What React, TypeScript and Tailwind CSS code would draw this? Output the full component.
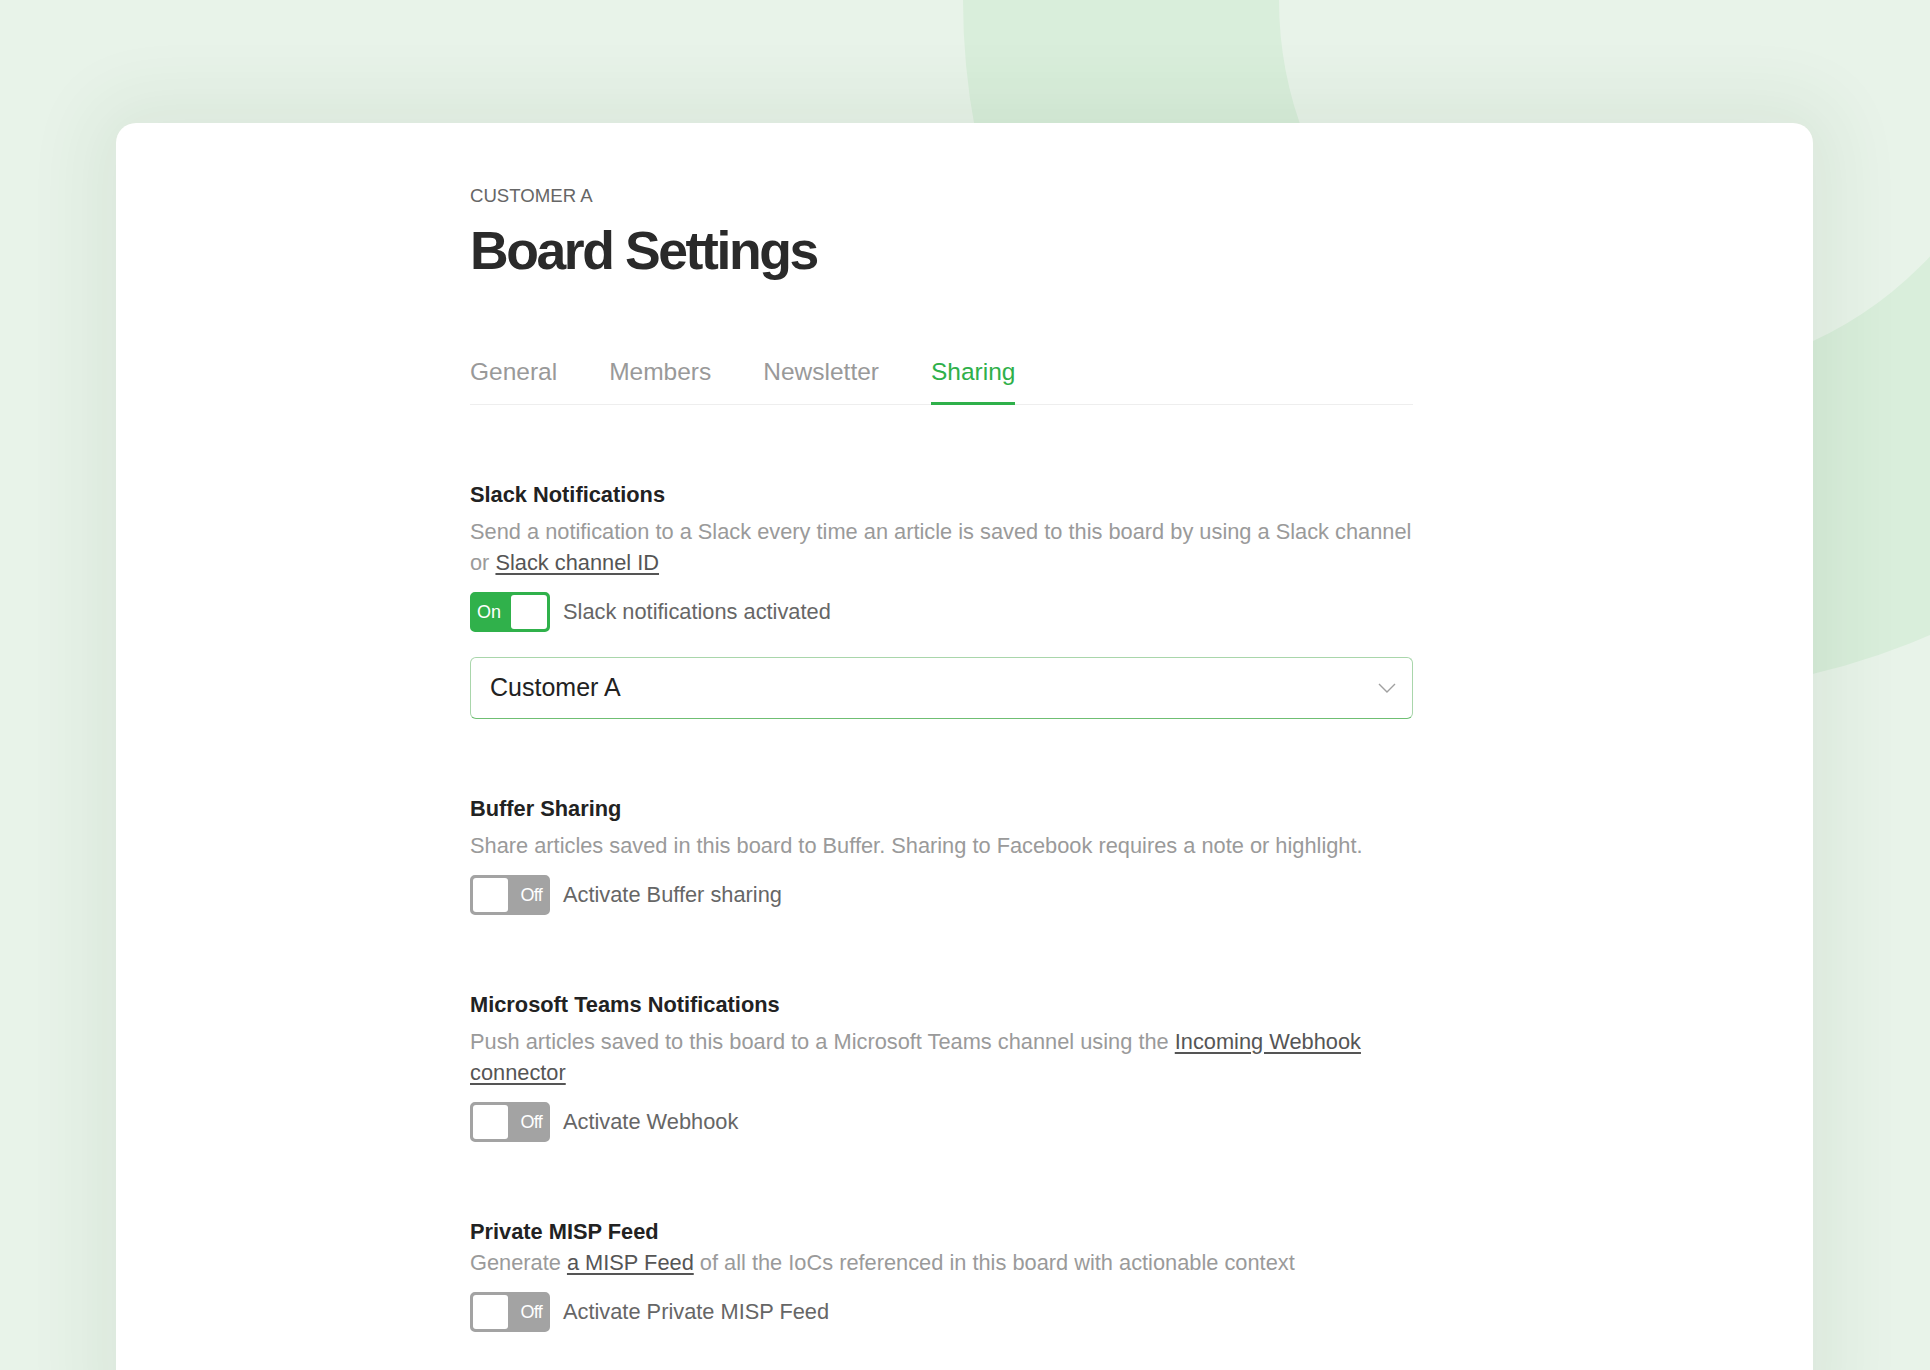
import { ReactNode } from 'react';

type Section = {
  title: string;
  description: ReactNode;
  label: string;
  on: boolean;
  tightDesc?: boolean;
  extra?: ReactNode;
};

function Toggle({ on }: { on: boolean }) {
  if (on) {
    return (
      <div className="w-[80px] h-[40px] shrink-0 rounded-[5px] border-2 border-[#30b14b] bg-[#30b14b] flex items-center justify-between pl-[5px] pr-px">
        <span className="text-[18px] leading-none text-white">On</span>
        <span className="w-[36px] h-[34px] rounded-[3px] bg-white" />
      </div>
    );
  }
  return (
    <div className="w-[80px] h-[40px] shrink-0 rounded-[5px] border-2 border-[#a3a3a3] bg-[#a3a3a3] flex items-center justify-between pl-px pr-[6px]">
      <span className="w-[35px] h-[34px] rounded-[3px] bg-white" />
      <span className="text-[18px] leading-none text-white tracking-[-0.04em]">Off</span>
    </div>
  );
}

function Link({ children }: { children: ReactNode }) {
  return <span className="text-[#555] underline underline-offset-[3px]">{children}</span>;
}

export default function App() {
  const tabs = ['General', 'Members', 'Newsletter', 'Sharing'];
  const active = 'Sharing';

  const sections: Section[] = [
    {
      title: 'Slack Notifications',
      description: (
        <>
          Send a notification to a Slack every time an article is saved to this board by using a Slack channel or{' '}
          <Link>Slack channel ID</Link>
        </>
      ),
      label: 'Slack notifications activated',
      on: true,
      extra: (
        <div className="mt-[25px] h-[62px] rounded-[6px] border border-[#a9d6ab] border-b-[#6fbf73] flex items-center justify-between pl-[19px] pr-[16px]">
          <span className="text-[25px] text-[#222]">Customer A</span>
          <svg width="18" height="10" viewBox="0 0 18 10" fill="none">
            <path d="M1 1l8 8 8-8" stroke="#a0a0a0" strokeWidth="1.4" />
          </svg>
        </div>
      ),
    },
    {
      title: 'Buffer Sharing',
      description: 'Share articles saved in this board to Buffer. Sharing to Facebook requires a note or highlight.',
      label: 'Activate Buffer sharing',
      on: false,
    },
    {
      title: 'Microsoft Teams Notifications',
      description: (
        <>
          Push articles saved to this board to a Microsoft Teams channel using the{' '}
          <Link>Incoming Webhook connector</Link>
        </>
      ),
      label: 'Activate Webhook',
      on: false,
    },
    {
      title: 'Private MISP Feed',
      description: (
        <>
          Generate <Link>a MISP Feed</Link> of all the IoCs referenced in this board with actionable context
        </>
      ),
      label: 'Activate Private MISP Feed',
      on: false,
      tightDesc: true,
    },
  ];

  return (
    <div className="relative w-[1930px] h-[1370px] overflow-hidden bg-[#e8f3e9] font-['Liberation_Sans',Arial,sans-serif]">
      {/* background ring */}
      <div className="absolute left-[963px] top-[-692px] w-[1384px] h-[1384px] rounded-full border-[316px] border-[#d9eedb]" />

      <div className="relative mt-[123px] ml-[116px] w-[1697px] h-[1300px] rounded-[20px] bg-white shadow-[0_0_70px_24px_rgba(40,80,40,0.07)] pt-[61px] pl-[354px]">
        <div className="w-[943px]">
          {/* Header */}
          <div className="text-[18.6px] leading-[24px] text-[#666] uppercase">Customer A</div>
          <h1 className="mt-[11px] text-[53.5px] leading-[64px] font-bold text-[#2a2a2a] tracking-[-0.045em]">
            Board Settings
          </h1>

          {/* Tabs */}
          <div className="mt-[73px] flex gap-[52px] border-b border-[#eeeeee]">
            {tabs.map(tab => (
              <div
                key={tab}
                className={`text-[24.5px] leading-[32px] pb-[14px] -mb-px border-b-[3px] ${
                  tab === active ? 'text-[#2fb04a] border-[#2fb04a]' : 'text-[#999] border-transparent'
                }`}
              >
                {tab}
              </div>
            ))}
          </div>

          {/* Sections */}
          <div className="mt-[74px] flex flex-col gap-[74px]">
            {sections.map(s => (
              <div key={s.title}>
                <h3 className="text-[21.8px] leading-[31px] font-bold text-[#222]">{s.title}</h3>
                <p className={`${s.tightDesc ? 'mt-0' : 'mt-[6px]'} text-[21.8px] leading-[31px] text-[#9a9a9a]`}>
                  {s.description}
                </p>
                <div className="mt-[14px] flex items-center gap-[13px]">
                  <Toggle on={s.on} />
                  <span className="text-[21.8px] text-[#666]">{s.label}</span>
                </div>
                {s.extra}
              </div>
            ))}
          </div>
        </div>
      </div>
    </div>
  );
}
